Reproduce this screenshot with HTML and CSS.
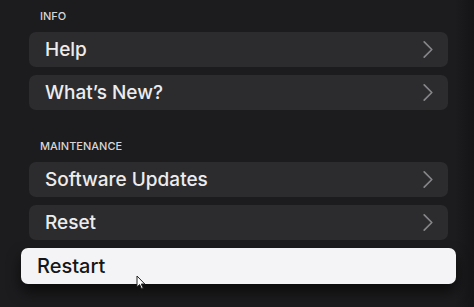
FILE: index.html
```html
<!DOCTYPE html>
<html lang="en">
<head>
    <meta charset="UTF-8">
    <meta name="viewport" content="width=device-width, initial-scale=1.0">
    <title>Settings</title>
    <link rel="stylesheet" href="styles.css">
</head>
<body>

    <div class="settings">
        <div class="section-title">Info</div>
        <div class="group">
            <div class="row">
                <span>Help</span>
                <svg class="chevron" viewBox="0 0 12 20"><path d="M2 2 L10 10 L2 18"/></svg>
            </div>
            <div class="row">
                <span>What’s New?</span>
                <svg class="chevron" viewBox="0 0 12 20"><path d="M2 2 L10 10 L2 18"/></svg>
            </div>
        </div>

        <div class="section-title maint">Maintenance</div>
        <div class="group">
            <div class="row">
                <span>Software Updates</span>
                <svg class="chevron" viewBox="0 0 12 20"><path d="M2 2 L10 10 L2 18"/></svg>
            </div>
            <div class="row">
                <span>Reset</span>
                <svg class="chevron" viewBox="0 0 12 20"><path d="M2 2 L10 10 L2 18"/></svg>
            </div>
            <div class="row focused">
                <span>Restart</span>
                <!-- mouse pointer -->
                <svg class="cursor" viewBox="0 0 10 15"><path d="M1 1 L1 12 L3.6 9.6 L5.6 14 L7.2 13.3 L5.3 9 L8.8 9 Z"/></svg>
            </div>
        </div>
    </div>

</body>
</html>
```

FILE: styles.css
```css
body {
    font-family: 'Inter', 'Liberation Sans', sans-serif;
    background: linear-gradient(to right, #1c1c1e 96%, #141416);
    margin: 0;
    padding: 0;
    height: 307px;
    overflow: hidden;
    color: #ececee;
}
.settings {
    width: 419px;
    margin-left: 29px;
    padding-top: 11px;
}
.section-title {
    font-size: 11px;
    font-weight: 500;
    text-transform: uppercase;
    color: #d6d6d8;
    padding-left: 11px;
    height: 21px;
    line-height: 11px;
}
.section-title.maint {
    margin-top: 31px;
    height: 21px;
}
.group {
    display: flex;
    flex-direction: column;
    gap: 8px;
}
.row {
    position: relative;
    height: 35px;
    display: flex;
    align-items: center;
    justify-content: space-between;
    padding: 0 14px 0 16px;
    background: #2c2c2f;
    border-radius: 7px;
    font-size: 19px;
    font-weight: 500;
}
.chevron {
    width: 12px;
    height: 19px;
    fill: none;
    stroke: #86868a;
    stroke-width: 1.8;
    stroke-linecap: round;
    stroke-linejoin: round;
}
.row.focused {
    height: 36px;
    margin: 0 -8px;
    background: #f4f4f6;
    color: #161618;
    font-size: 20px;
    box-shadow: 0 8px 14px rgba(0, 0, 0, 0.6);
}
.cursor {
    position: absolute;
    left: 115px;
    top: 27px;
    width: 10px;
    height: 15px;
    fill: #fff;
    stroke: #222;
    stroke-width: 1;
}
```
